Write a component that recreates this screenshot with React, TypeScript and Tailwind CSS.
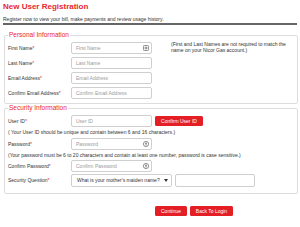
import React from "react";

const RED = "text-[#e8262d]";

function CardIcon() {
  return (
    <svg width="6" height="6" viewBox="0 0 6 6" className="shrink-0">
      <rect x="0.5" y="0.5" width="5" height="5" rx="0.8" fill="#fff" stroke="#777" strokeWidth="0.8" />
      <rect x="1.7" y="1.7" width="2.6" height="2.6" fill="#999" />
    </svg>
  );
}

function KeyIcon() {
  return (
    <svg width="6" height="6" viewBox="0 0 6 6" className="shrink-0">
      <circle cx="3" cy="3" r="2.6" fill="#fff" stroke="#777" strokeWidth="0.8" />
      <circle cx="3" cy="2.4" r="0.8" fill="#777" />
      <rect x="2.6" y="2.8" width="0.8" height="1.8" fill="#777" />
    </svg>
  );
}

function Field({ placeholder, icon }: { placeholder: string; icon?: React.ReactNode }) {
  return (
    <div className="w-[81px] h-[12px] border border-[#cfcfcf] rounded-[2px] bg-white flex items-center pl-[4px] pr-[2px] shrink-0">
      <span className="flex-1 text-[5px] text-[#9a9a9a] leading-none">{placeholder}</span>
      {icon}
    </div>
  );
}

function Label({ text }: { text: string }) {
  return (
    <span className="w-[63px] shrink-0 text-[5px] text-[#333] leading-none">
      {text}
      <span className={RED}>*</span>
    </span>
  );
}

function Row({ label, placeholder, icon, children }: { label: string; placeholder: string; icon?: React.ReactNode; children?: React.ReactNode }) {
  return (
    <div className="flex items-center h-[12px]">
      <Label text={label} />
      <Field placeholder={placeholder} icon={icon} />
      {children}
    </div>
  );
}

export default function App() {
  return (
    <div className="w-[300px] h-[227px] bg-white px-[3px] overflow-hidden" style={{ fontFamily: '"Liberation Sans", Arial, sans-serif' }}>
      <h1 className={`text-[8px] font-bold leading-[12px] pt-[1px] ${RED}`}>New User Registration</h1>
      <p className="text-[5px] text-[#333] leading-[6px] mt-[3px]">
        Register now to view your bill, make payments and review usage history.
      </p>
      <div className="mt-[1px] border-b-2 border-[#666]" />

      {/* Personal Information */}
      <fieldset className="mt-[6px] ml-[1px] w-[294px] border border-[#dddddd] rounded-[2px] pl-[3px] pt-[3px] pb-[4px]">
        <legend className={`px-[1px] text-[6.5px] leading-[8px] ${RED}`}>Personal Information</legend>
        <div className="flex">
          <div className="flex flex-col gap-[3px]">
            <Row label="First Name" placeholder="First Name" icon={<CardIcon />} />
            <Row label="Last Name" placeholder="Last Name" />
            <Row label="Email Address" placeholder="Email Address" />
            <Row label="Confirm Email Address" placeholder="Confirm Email Address" />
          </div>
          <p className="ml-[19px] mt-[-1px] w-[118px] text-[5px] leading-[6px] text-[#333]">
            (First and Last Names are not required to match the name on your Nicor Gas account.)
          </p>
        </div>
      </fieldset>

      {/* Security Information */}
      <fieldset className="ml-[1px] w-[294px] border border-[#dddddd] rounded-[2px] pl-[3px] pt-[3px] pb-[6px]">
        <legend className={`px-[1px] text-[6.5px] leading-[8px] ${RED}`}>Security Information</legend>
        <div className="flex flex-col">
          <Row label="User ID" placeholder="User ID">
            <button className="ml-[3px] h-[10px] w-[48px] bg-[#e31e24] rounded-[1.5px] text-white text-[5px] leading-none">
              Confirm User ID
            </button>
          </Row>
          <p className="h-[11px] flex items-center text-[5px] text-[#333] leading-none">
            ( Your User ID should be unique and contain between 6 and 16 characters.)
          </p>
          <Row label="Password" placeholder="Password" icon={<KeyIcon />} />
          <p className="h-[10px] flex items-center text-[5px] text-[#333] leading-none">
            (Your password must be 6 to 20 characters and contain at least one number, password is case sensitive.)
          </p>
          <Row label="Confirm Password" placeholder="Confirm Password" icon={<KeyIcon />} />
          <div className="flex items-center h-[13px] mt-[2px]">
            <Label text="Security Question" />
            <div className="w-[101px] h-[13px] border border-[#cfcfcf] rounded-[2px] flex items-center pl-[5px] pr-[3px] shrink-0">
              <span className="flex-1 text-[5px] text-[#333] leading-none">What is your mother's maiden name?</span>
              <svg width="4" height="3" viewBox="0 0 4 3">
                <path d="M0 0 L4 0 L2 3 Z" fill="#333" />
              </svg>
            </div>
            <div className="ml-[3px] w-[80px] h-[13px] border border-[#cfcfcf] rounded-[2px] bg-white shrink-0" />
          </div>
        </div>
      </fieldset>

      <div className="flex gap-[3px] mt-[12px] ml-[152px]">
        <button className="h-[10px] w-[32px] bg-[#e31e24] rounded-[1.5px] text-white text-[5px] leading-none">Continue</button>
        <button className="h-[10px] w-[43px] bg-[#e31e24] rounded-[1.5px] text-white text-[5px] leading-none">Back To Login</button>
      </div>
    </div>
  );
}
